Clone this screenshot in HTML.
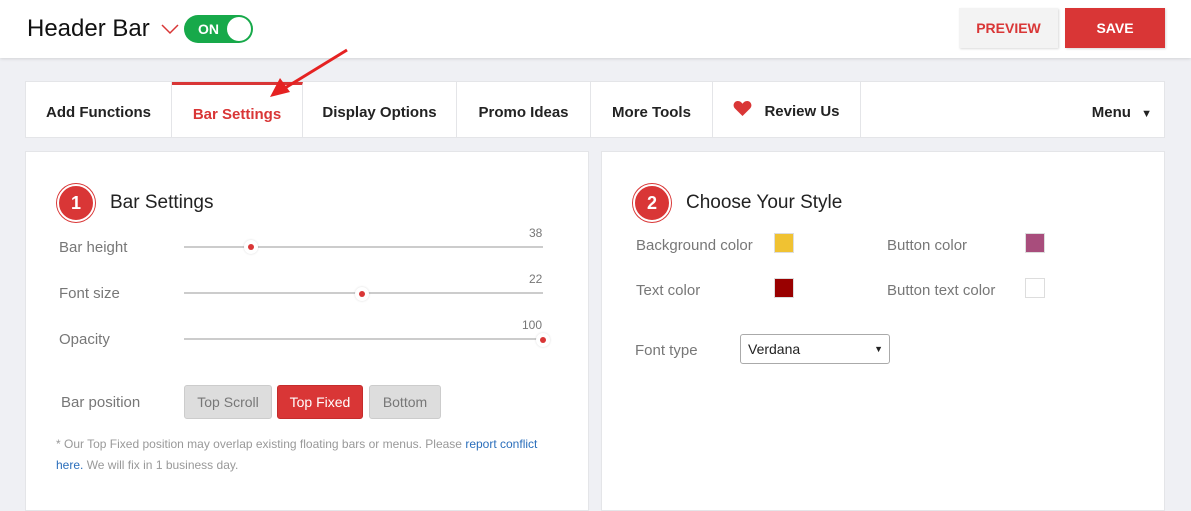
<!DOCTYPE html>
<html><head><style>
*{margin:0;padding:0;box-sizing:border-box}
body{width:1191px;height:503px;background:#eff0f4;font-family:"Liberation Sans",sans-serif;position:relative;overflow:hidden}
.abs{position:absolute}
.hdr{left:0;top:0;width:1191px;height:58px;background:#fff;box-shadow:0 1px 3px rgba(0,0,0,.12)}
.tabs{left:25px;top:81px;width:1140px;height:57px;background:#fff;border:1px solid #e4e5e8}
.tab{position:absolute;top:0;height:55px;line-height:62px;font-weight:bold;font-size:15px;color:#222;text-align:center;border-right:1px solid #e4e5e8}
.panel{background:#fff;border:1px solid #e4e5e8;top:151px;height:360px}
.lbl{font-size:15px;color:#777}
.num{width:38px;height:38px;border-radius:50%;background:#d93636;border:2px solid #fff;box-shadow:0 0 0 1px #d93636;color:#fff;font-weight:bold;font-size:18px;text-align:center;line-height:34px}
.h2{font-family:"Liberation Sans",sans-serif;font-size:19px;color:#222}
.track{height:2px;background:#ccc;left:184px;width:359px}
.dot{width:14px;height:14px;border-radius:50%;background:#fff;box-shadow:0 0 2px rgba(0,0,0,.15)}
.dot:after{content:"";position:absolute;left:4px;top:4px;width:6px;height:6px;border-radius:50%;background:#d93636}
.val{font-size:12px;color:#777;right:0}
.btn{top:385px;height:34px;line-height:33px;font-size:14px;text-align:center;border-radius:3px;background:#ddd;border:1px solid #ccc;color:#777}
.sw{width:20px;height:20px;border:1px solid #ddd}
</style></head><body>
<div class="abs hdr"></div>
<div class="abs" style="left:27px;top:15px;font-size:24px;color:#111">Header Bar</div>
<svg class="abs" style="left:160px;top:23px" width="20" height="12"><path d="M2 2 L10 10 L18 2" fill="none" stroke="#d93636" stroke-width="1.5"/></svg>
<div class="abs" style="left:184px;top:15px;width:69px;height:28px;border-radius:14px;background:#17a94a;color:#fff;font-weight:bold;font-size:14px;line-height:28px;padding-left:14px">ON<div class="abs" style="right:2px;top:2px;width:24px;height:24px;border-radius:50%;background:#fff"></div></div>
<div class="abs" style="left:959px;top:8px;width:99px;height:40px;background:#f3f3f3;box-shadow:1px 1px 2px rgba(0,0,0,.15);color:#d93636;font-weight:bold;font-size:14px;text-align:center;line-height:40px">PREVIEW</div>
<div class="abs" style="left:1065px;top:8px;width:100px;height:40px;background:#d93636;box-shadow:1px 1px 2px rgba(0,0,0,.15);color:#fff;font-weight:bold;font-size:14px;text-align:center;line-height:40px">SAVE</div>
<div class="abs tabs">
<div class="tab" style="left:0;width:146px">Add Functions</div>
<div class="tab" style="left:146px;width:131px;color:#d93636;border-top:3px solid #d93636;line-height:59px;height:55px">Bar Settings</div>
<div class="tab" style="left:277px;width:154px">Display Options</div>
<div class="tab" style="left:431px;width:134px">Promo Ideas</div>
<div class="tab" style="left:565px;width:122px">More Tools</div>
<div class="tab" style="left:687px;width:148px;line-height:60px"><svg width="19" height="17" viewBox="0 0 20 18" style="vertical-align:-1px;margin-right:12px"><path d="M10 17 L2 9 C-1 6 1 1 5 1 C7.5 1 9 2.5 10 4 C11 2.5 12.5 1 15 1 C19 1 21 6 18 9 Z" fill="#d93636"/></svg>Review Us</div>
<div class="tab" style="right:12px;border:none;width:80px;text-align:right">Menu <span style="font-size:11px;margin-left:6px">&#9660;</span></div>
</div>
<svg class="abs" style="left:260px;top:44px" width="100" height="60"><line x1="87" y1="6" x2="25" y2="44" stroke="#e52222" stroke-width="3"/><path d="M10 53 L20 34 L30 48 Z" fill="#e52222"/></svg>
<div class="abs panel" style="left:25px;width:564px"></div>
<div class="abs panel" style="left:601px;width:564px"></div>
<div class="abs num" style="left:57px;top:184px">1</div>
<div class="abs h2" style="left:110px;top:192px">Bar Settings</div>
<div class="abs lbl" style="left:59px;top:239px">Bar height</div>
<div class="abs lbl" style="left:59px;top:285px">Font size</div>
<div class="abs lbl" style="left:59px;top:331px">Opacity</div>
<div class="abs track" style="top:246px"></div>
<div class="abs track" style="top:292px"></div>
<div class="abs track" style="top:338px"></div>
<div class="abs dot" style="left:244px;top:240px"></div>
<div class="abs dot" style="left:355px;top:287px"></div>
<div class="abs dot" style="left:536px;top:333px"></div>
<div class="abs val" style="left:529px;top:226px">38</div>
<div class="abs val" style="left:529px;top:272px">22</div>
<div class="abs val" style="left:522px;top:318px">100</div>
<div class="abs lbl" style="left:61px;top:394px">Bar position</div>
<div class="abs btn" style="left:184px;width:88px">Top Scroll</div>
<div class="abs btn" style="left:277px;width:86px;background:#d93636;border-color:#c52c2c;color:#fff">Top Fixed</div>
<div class="abs btn" style="left:369px;width:72px">Bottom</div>
<div class="abs" style="left:56px;top:434px;font-size:12px;color:#999;line-height:21px;width:500px">* Our Top Fixed position may overlap existing floating bars or menus. Please <span style="color:#2a6ebb">report conflict here.</span> We will fix in 1 business day.</div>
<div class="abs num" style="left:633px;top:184px">2</div>
<div class="abs h2" style="left:686px;top:192px">Choose Your Style</div>
<div class="abs lbl" style="left:636px;top:237px">Background color</div>
<div class="abs lbl" style="left:636px;top:282px">Text color</div>
<div class="abs lbl" style="left:887px;top:237px">Button color</div>
<div class="abs lbl" style="left:887px;top:282px">Button text color</div>
<div class="abs sw" style="left:774px;top:233px;background:#f0c232"></div>
<div class="abs sw" style="left:774px;top:278px;background:#990000"></div>
<div class="abs sw" style="left:1025px;top:233px;background:#a84d7c"></div>
<div class="abs sw" style="left:1025px;top:278px;background:#fff"></div>
<div class="abs lbl" style="left:635px;top:342px">Font type</div>
<div class="abs" style="left:740px;top:334px;width:150px;height:30px;border:1px solid #aaa;border-radius:3px;font-size:14px;line-height:28px;padding-left:7px;color:#222">Verdana<span style="position:absolute;right:6px;font-size:9px">&#9660;</span></div>
</body></html>
